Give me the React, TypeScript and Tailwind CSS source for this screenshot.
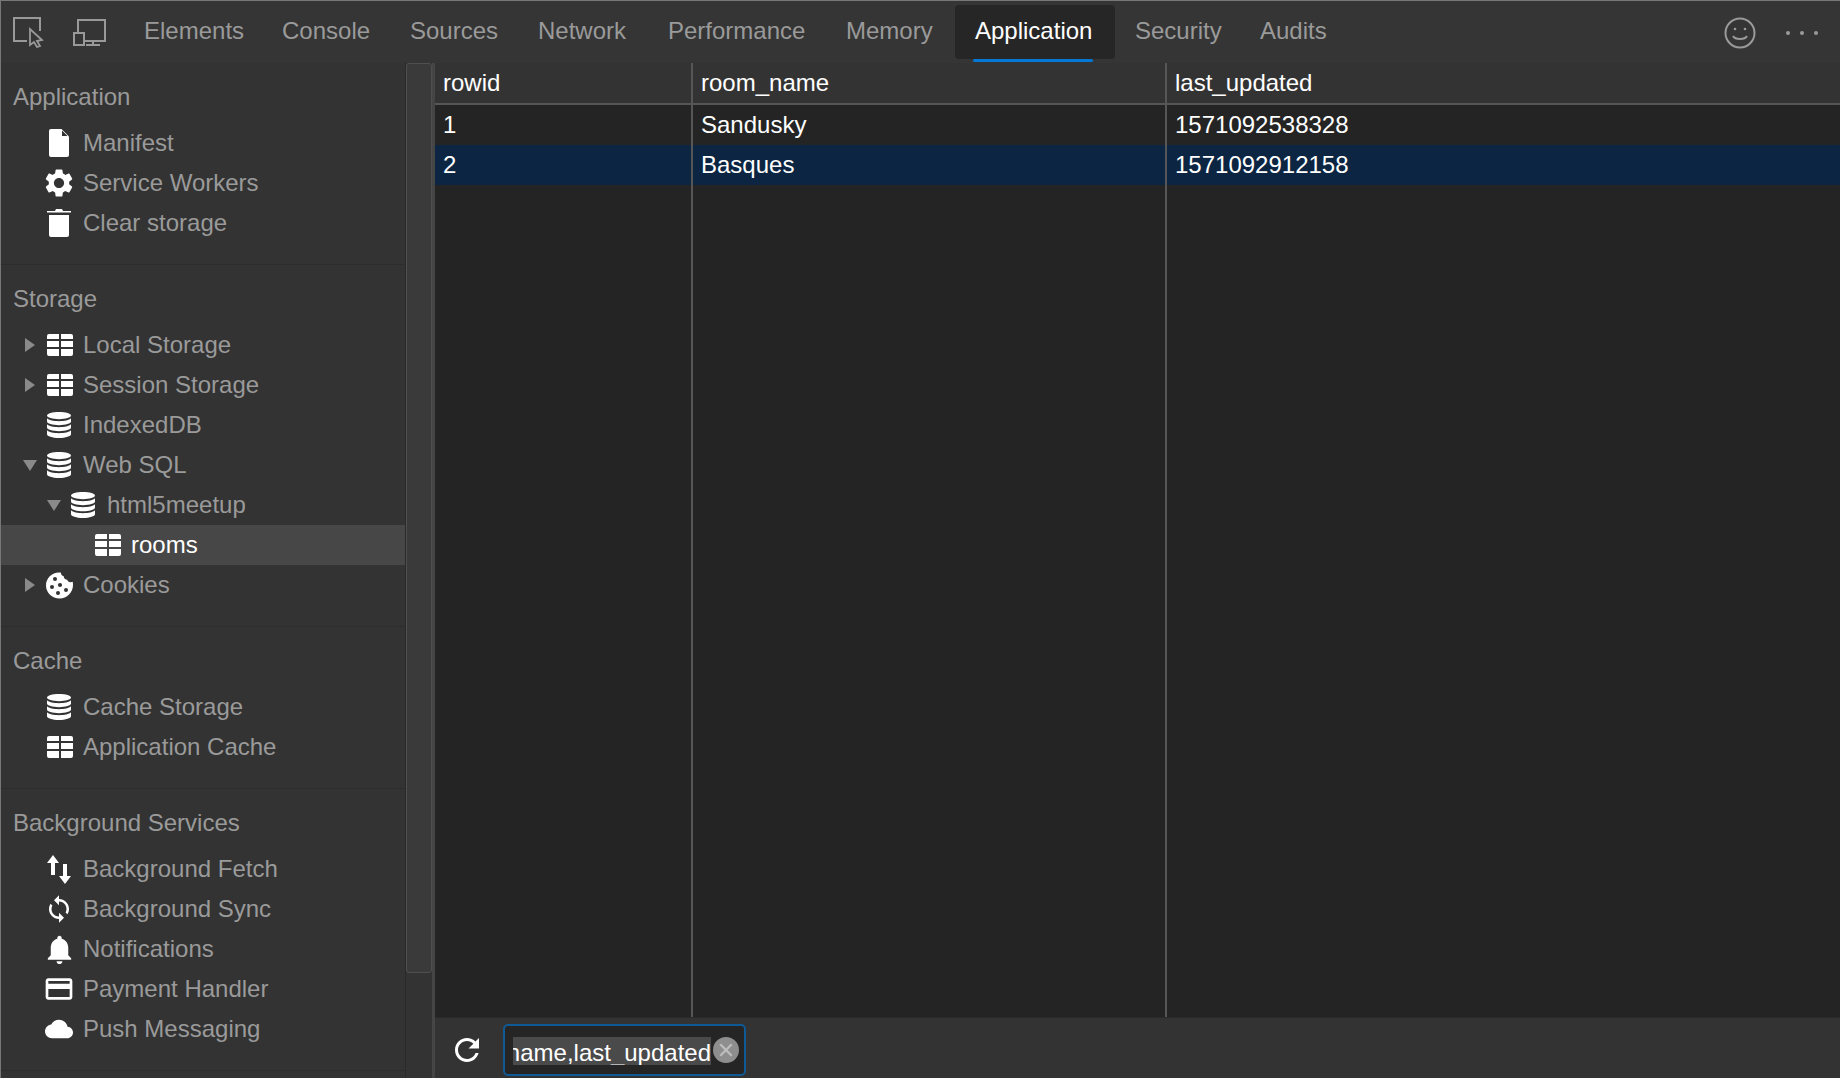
import React from 'react';

const FONT = "font-['Liberation_Sans',Arial,sans-serif]";

function Material({ d, className }: { d: string; className: string }) {
  return (
    <svg viewBox="0 0 24 24" fill="currentColor" className={className}>
      <path d={d} />
    </svg>
  );
}

function TableIcon() {
  return (
    <svg viewBox="0 0 26 22" className="ml-[2px] w-[26px] h-[22px]" fill="currentColor">
      <path d="M2 0h10v5H0V2a2 2 0 0 1 2-2zM14 0h10a2 2 0 0 1 2 2v3H14zM0 7h12v6H0zM14 7h12v6H14zM0 15h12v7H2a2 2 0 0 1-2-2zM14 15h12v5a2 2 0 0 1-2 2H14z" />
    </svg>
  );
}

function DbIcon() {
  return (
    <svg viewBox="0 0 24 26" className="w-[24px] h-[26px]" fill="currentColor">
      <path d="M12 0c6.600 0 12 1.600 12 3.600S18.600 7.200 12 7.200 0 5.600 0 3.600 5.400 0 12 0z" />
      <path d="M0 6.300C2 8.300 6.500 9.200 12 9.200s10-.9 12-2.900v3.300c0 2-5.400 3.600-12 3.600S0 11.600 0 9.600z" />
      <path d="M0 12.300c2 2 6.500 2.900 12 2.900s10-.9 12-2.900v3.300c0 2-5.400 3.600-12 3.600S0 17.600 0 15.600z" />
      <path d="M0 18.300c2 2 6.500 2.900 12 2.900s10-.9 12-2.900v4c0 2-5.400 3.700-12 3.700S0 24.300 0 22.300z" />
    </svg>
  );
}

function CookieIcon() {
  return (
    <svg viewBox="0 0 27 27" className="w-[27px] h-[27px]">
      <path
        fill="currentColor"
        d="M13 .5c.8 0 1.400.1 2 .2-.2 1.800 1 3.300 2.700 3.500.1 2 1.600 3.500 3.500 3.600.4 1.600 2 2.600 3.500 2.400.7 0 1.600-.2 2-.5.2.9.3 2 .3 3.300 0 7.200-6 13.500-13.500 13.500S0 20.700 0 13.500 5.800.5 13 .5z"
      />
      <circle cx="9" cy="7" r="2" fill="#333" />
      <circle cx="6" cy="15" r="2" fill="#333" />
      <circle cx="14" cy="13" r="2.100" fill="#333" />
      <circle cx="12" cy="21" r="2" fill="#333" />
      <circle cx="20" cy="18" r="2" fill="#333" />
    </svg>
  );
}

function FileIcon() {
  return (
    <svg viewBox="0 0 20 28" className="w-[20px] h-[28px]" fill="currentColor">
      <path d="M2 0h10.500L20 7.500V26a2 2 0 0 1-2 2H2a2 2 0 0 1-2-2V2a2 2 0 0 1 2-2z" />
      <path d="M13 1.500 18.500 7H13z" fill="#333" />
    </svg>
  );
}

function TrashIcon() {
  return (
    <svg viewBox="0 0 24 28" className="w-[24px] h-[28px]" fill="currentColor">
      <path d="M0 2h8l1-2h6l1 2h8v1.600H0z" />
      <path d="M2 6h20v20a2 2 0 0 1-2 2H4a2 2 0 0 1-2-2z" />
    </svg>
  );
}

function FetchIcon() {
  return (
    <svg viewBox="0 0 26 29" className="w-[26px] h-[29px]" fill="currentColor">
      <path d="M7 0 13 8H9v12H5V8H1zM19 29l-6-8h4V9h4v12h4z" />
    </svg>
  );
}

const gear =
  'M19.14 12.94c.04-.3.06-.61.06-.94 0-.32-.02-.64-.07-.94l2.03-1.58c.18-.14.23-.41.12-.61l-1.92-3.32c-.12-.22-.37-.29-.59-.22l-2.39.96c-.5-.38-1.03-.7-1.62-.94l-.36-2.54c-.04-.24-.24-.41-.48-.41h-3.84c-.24 0-.43.17-.47.41l-.36 2.54c-.59.24-1.13.57-1.62.94l-2.39-.96c-.22-.08-.47 0-.59.22L2.74 8.87c-.12.21-.08.47.12.61l2.03 1.58c-.05.3-.09.63-.09.94s.02.64.07.94l-2.03 1.58c-.18.14-.23.41-.12.61l1.92 3.32c.12.22.37.29.59.22l2.39-.96c.5.38 1.03.7 1.62.94l.36 2.54c.05.24.24.41.48.41h3.84c.24 0 .44-.17.47-.41l.36-2.54c.59-.24 1.13-.56 1.62-.94l2.39.96c.22.08.47 0 .59-.22l1.92-3.32c.12-.22.07-.47-.12-.61l-2.01-1.58zM12 15.600c-1.980 0-3.600-1.620-3.600-3.600s1.620-3.600 3.600-3.600 3.600 1.620 3.600 3.600-1.620 3.600-3.600 3.600z';
const sync =
  'M12 4V1L8 5l4 4V6c3.310 0 6 2.690 6 6 0 1.010-.25 1.970-.7 2.800l1.460 1.460C19.540 15.030 20 13.570 20 12c0-4.420-3.580-8-8-8zm0 14c-3.310 0-6-2.690-6-6 0-1.010.25-1.970.7-2.800L5.240 7.740C4.460 8.970 4 10.430 4 12c0 4.420 3.580 8 8 8v3l4-4-4-4v3z';
const bell =
  'M12 22c1.100 0 2-.9 2-2h-4c0 1.100.89 2 2 2zm6-6v-5c0-3.070-1.640-5.640-4.500-6.320V4c0-.83-.67-1.500-1.500-1.500s-1.500.67-1.500 1.500v.68C7.630 5.360 6 7.920 6 11v5l-2 2v1h16v-1l-2-2z';
const card =
  'M20 4H4c-1.110 0-1.990.89-1.990 2L2 18c0 1.110.89 2 2 2h16c1.110 0 2-.89 2-2V6c0-1.110-.89-2-2-2zm0 14H4v-6h16v6zm0-10H4V6h16v2z';
const cloud =
  'M19.350 10.040C18.670 6.590 15.640 4 12 4 9.110 4 6.600 5.640 5.350 8.040 2.340 8.360 0 10.910 0 14c0 3.310 2.690 6 6 6h13c2.760 0 5-2.240 5-5 0-2.640-2.050-4.780-4.650-4.960z';
const refresh =
  'M17.650 6.350C16.200 4.900 14.210 4 12 4c-4.420 0-7.990 3.580-7.990 8s3.570 8 7.990 8c3.730 0 6.840-2.550 7.730-6h-2.080c-.82 2.330-3.040 4-5.650 4-3.310 0-6-2.690-6-6s2.690-6 6-6c1.660 0 3.140.69 4.220 1.780L13 11h7V4l-2.350 2.350z';

function Row({
  label,
  icon,
  arrow,
  indent = 'pl-[21px]',
  active,
}: {
  label: string;
  icon: React.ReactNode;
  arrow?: 'right' | 'down';
  indent?: string;
  active?: boolean;
}) {
  return (
    <div className={`flex items-center h-10 ${indent} ${active ? 'bg-[#474747] text-white' : 'text-[#9a9a9a]'}`}>
      <span className="w-[22px] flex items-center justify-start shrink-0">
        {arrow === 'right' && (
          <span className="ml-[3px] w-0 h-0 border-y-[7px] border-y-transparent border-l-[10px] border-l-[#8a8a8a]" />
        )}
        {arrow === 'down' && (
          <span className="ml-[1px] w-0 h-0 border-x-[7px] border-x-transparent border-t-[11px] border-t-[#8a8a8a]" />
        )}
      </span>
      <span className="w-[30px] flex items-center justify-center text-white shrink-0">{icon}</span>
      <span className="ml-[9px]">{label}</span>
    </div>
  );
}

function Section({ title, children }: { title: string; children: React.ReactNode }) {
  return (
    <div className="border-b border-[#2d2d2d] pt-[14px] pb-[21px]">
      <div className="h-10 pl-[12px] flex items-center text-[#9a9a9a] mb-[6px]">{title}</div>
      {children}
    </div>
  );
}

// widths measured per tab, the reference font spaces them a little differently
const tabs = [
  { label: 'Elements', width: 'w-[138px]' },
  { label: 'Console', width: 'w-[128px]' },
  { label: 'Sources', width: 'w-[128px]' },
  { label: 'Network', width: 'w-[130px]' },
  { label: 'Performance', width: 'w-[178px]' },
  { label: 'Memory', width: 'w-[129px]' },
  { label: 'Application', width: 'w-[160px]' },
  { label: 'Security', width: 'w-[125px]' },
  { label: 'Audits', width: 'w-[110px]' },
];

function Toolbar() {
  return (
    <div className="h-[62px] bg-[#353535] flex items-center shrink-0">
      <svg viewBox="0 0 34 32" className="ml-[11px] w-[34px] h-[32px]" fill="none" stroke="#999" strokeWidth="2">
        <path d="M15 25H2V2h26v13" />
        <path d="M18 13v16l4-3 3 5 3-1-3-5 5-1z" strokeWidth="1.800" />
      </svg>
      <svg viewBox="0 0 34 28" className="ml-[26px] w-[34px] h-[28px]" fill="none" stroke="#999" strokeWidth="2">
        <path d="M6 15V2h27v21H13" />
        <path d="M2 15h10v12H2zM14 27h14M21 23v4" />
      </svg>
      <div className="flex items-center ml-[18px] h-full">
        {tabs.map((t) => (
          <div
            key={t.label}
            className={`relative h-[54px] flex items-center pl-5 pb-[2px] rounded-[4px] ${t.width} ${
              t.label === 'Application' ? 'bg-[#262626] text-white' : 'text-[#9a9a9a]'
            }`}
          >
            {t.label}
            {t.label === 'Application' && (
              <span className="absolute left-[18px] right-[22px] bottom-[-3px] h-[3px] rounded-[2px] bg-[#0078d4]" />
            )}
          </div>
        ))}
      </div>
      <div className="ml-auto flex items-center mr-[22px] mt-[1px]">
        <svg viewBox="0 0 32 32" className="w-[32px] h-[32px]" fill="none" stroke="#9a9a9a" strokeWidth="2">
          <circle cx="16" cy="16" r="14.500" />
          <circle cx="11" cy="12" r="1.300" fill="#9a9a9a" stroke="none" />
          <circle cx="21" cy="12" r="1.300" fill="#9a9a9a" stroke="none" />
          <path d="M9 19c2 4 12 4 14 0" />
        </svg>
        <div className="ml-[30px] flex gap-[10px]">
          <span className="w-1 h-1 rounded-full bg-[#9a9a9a]" />
          <span className="w-1 h-1 rounded-full bg-[#9a9a9a]" />
          <span className="w-1 h-1 rounded-full bg-[#9a9a9a]" />
        </div>
      </div>
    </div>
  );
}

function Sidebar() {
  return (
    <div className="w-[404px] shrink-0 bg-[#333333] overflow-hidden">
      <Section title="Application">
        <Row label="Manifest" icon={<FileIcon />} />
        <Row label="Service Workers" icon={<Material d={gear} className="w-[34px] h-[34px] shrink-0" />} />
        <Row label="Clear storage" icon={<TrashIcon />} />
      </Section>
      <Section title="Storage">
        <Row label="Local Storage" arrow="right" icon={<TableIcon />} />
        <Row label="Session Storage" arrow="right" icon={<TableIcon />} />
        <Row label="IndexedDB" icon={<DbIcon />} />
        <Row label="Web SQL" arrow="down" icon={<DbIcon />} />
        <Row label="html5meetup" arrow="down" indent="pl-[45px]" icon={<DbIcon />} />
        <Row label="rooms" indent="pl-[69px]" active icon={<TableIcon />} />
        <Row label="Cookies" arrow="right" icon={<CookieIcon />} />
      </Section>
      <Section title="Cache">
        <Row label="Cache Storage" icon={<DbIcon />} />
        <Row label="Application Cache" icon={<TableIcon />} />
      </Section>
      <Section title="Background Services">
        <Row label="Background Fetch" icon={<FetchIcon />} />
        <Row label="Background Sync" icon={<Material d={sync} className="w-[30px] h-[30px] shrink-0" />} />
        <Row label="Notifications" icon={<Material d={bell} className="w-[35px] h-[35px] shrink-0" />} />
        <Row label="Payment Handler" icon={<Material d={card} className="w-[32px] h-[32px] shrink-0" />} />
        <Row label="Push Messaging" icon={<Material d={cloud} className="w-[28px] h-[28px] shrink-0" />} />
      </Section>
    </div>
  );
}

function Scrollbar() {
  return (
    <div className="w-[30px] shrink-0 bg-[#333333] border-l border-[#2a2a2a] border-r-[3px] border-r-[#454545]">
      <div className="h-[910px] bg-[#3a3a3a] border border-[#4f4f4f] rounded-[3px]" />
    </div>
  );
}

const rows = [
  { id: '1', name: 'Sandusky', updated: '1571092538328' },
  { id: '2', name: 'Basques', updated: '1571092912158' },
];

function DataTable() {
  return (
    <div className="flex-1 flex flex-col min-w-0">
      <div className="flex-1 flex bg-[#242424] text-white min-h-0">
        <Column title="rowid" width="w-[258px]" values={rows.map((r) => r.id)} />
        <Column title="room_name" width="w-[474px]" values={rows.map((r) => r.name)} />
        <Column title="last_updated" width="flex-1" values={rows.map((r) => r.updated)} last />
      </div>
      <div className="h-[61px] shrink-0 bg-[#333333] border-t border-[#2a2a2a] flex items-center pl-[14px] pt-[4px]">
        <Material d={refresh} className="w-[36px] h-[36px] text-white shrink-0" />
        <div className="ml-[18px] h-[52px] w-[243px] rounded-[5px] border-2 border-[#0f5a94] bg-[#252525] flex items-center pl-[8px] relative overflow-hidden">
          <div className="w-[198px] h-[28px] mt-[2px] pt-[3px] bg-[#4a4a4a] text-white overflow-hidden flex items-center justify-end leading-none whitespace-nowrap">
            room_name,last_updated
          </div>
          <span className="absolute right-[5px] top-[11px] w-[26px] h-[26px] rounded-full bg-[#8e8e8e] flex items-center justify-center">
            <svg viewBox="0 0 14 14" className="w-[16px] h-[16px]" stroke="#bdbdbd" strokeWidth="2">
              <path d="M2 2l10 10M12 2 2 12" />
            </svg>
          </span>
        </div>
      </div>
    </div>
  );
}

function Column({ title, width, values, last }: { title: string; width: string; values: string[]; last?: boolean }) {
  return (
    <div className={`${width} flex flex-col ${last ? '' : 'border-r-2 border-[#565656]'}`}>
      <div className="h-[42px] shrink-0 bg-[#333333] border-b-2 border-[#565656] flex items-center pl-2">{title}</div>
      {values.map((v, i) => (
        <div key={v} className={`h-10 flex items-center pl-2 ${i === 1 ? 'bg-[#0b2542]' : ''}`}>
          {v}
        </div>
      ))}
    </div>
  );
}

export default function App() {
  return (
    <div className={`${FONT} w-[1840px] h-[1078px] overflow-hidden flex flex-col bg-[#333333] text-[24px] border-t border-l border-[#777777]`}>
      <Toolbar />
      <div className="flex-1 flex min-h-0">
        <Sidebar />
        <Scrollbar />
        <DataTable />
      </div>
    </div>
  );
}
